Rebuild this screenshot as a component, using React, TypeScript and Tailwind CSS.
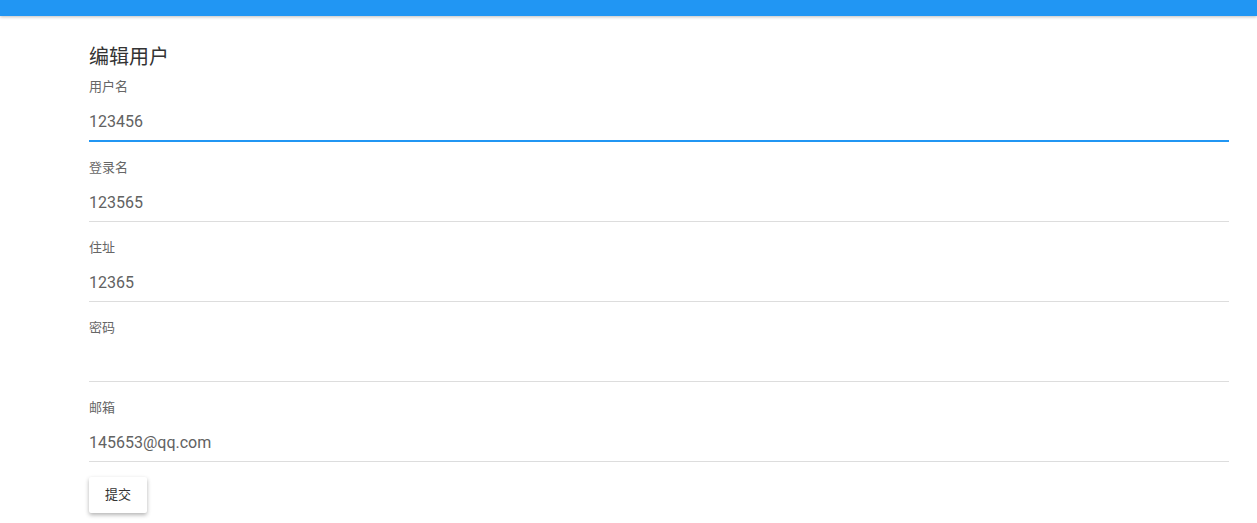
import React from "react";

const fields = [
  { label: "用户名", value: "123456", focused: true },
  { label: "登录名", value: "123565" },
  { label: "住址", value: "12365" },
  { label: "密码", value: "", type: "password" },
  { label: "邮箱", value: "145653@qq.com" },
];

export default function App() {
  return (
    <div className="min-h-screen bg-white font-['Roboto','Noto_Sans_CJK_SC',sans-serif]">
      <div className="h-4 w-full bg-[#2196f3] shadow-[0_1px_3px_rgba(0,0,0,0.25)]" />

      <div className="ml-[89px] w-[1140px]">
        <h2 className="mt-[27px] text-[20px] leading-[28px] text-[#333]">编辑用户</h2>

        <form onSubmit={(e) => e.preventDefault()}>
          {fields.map((f, i) => (
            <div key={f.label} className={i === 0 ? "pt-[6px]" : "pt-[16px]"}>
              <label className="block text-[13px] leading-[20px] text-[#666]">{f.label}</label>
              <input
                type={f.type ?? "text"}
                defaultValue={f.value}
                autoFocus={f.focused}
                className={
                  "mt-[6px] block w-full bg-transparent text-[16px] text-[#626262] outline-none " +
                  (f.focused
                    ? "h-[39px] border-b-2 border-[#2196f3] caret-[#333]"
                    : "h-[38px] border-b border-[#ddd]")
                }
              />
            </div>
          ))}

          <button
            type="submit"
            className="mt-[15px] h-9 w-[58px] rounded-[2px] bg-white text-[13px] text-[#333] shadow-[0_2px_4px_rgba(0,0,0,0.3)]"
          >
            提交
          </button>
        </form>
      </div>
    </div>
  );
}
